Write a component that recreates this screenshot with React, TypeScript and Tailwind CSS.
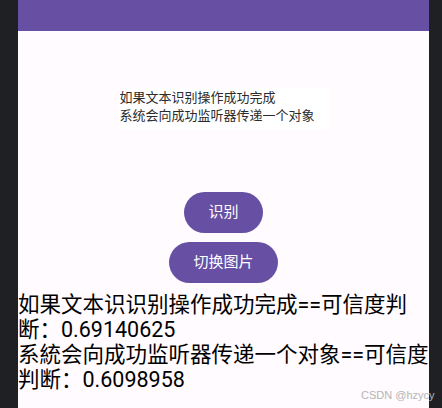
export default function App() {
  const results = [
    '如果文本识识别操作成功完成==可信度判',
    '断：0.69140625',
    '系統会向成功监听器传递一个对象==可信度',
    '判断：0.6098958',
  ];

  return (
    <div className="relative flex h-[408px] w-[442px] overflow-hidden bg-[#1f2024] font-['Roboto','Noto_Sans_CJK_SC',sans-serif]">
      <div className="w-[18px] shrink-0" />

      <div className="flex w-[411px] shrink-0 flex-col bg-[#fffbfe]">
        {/* App bar */}
        <div className="h-[31px] bg-[#6750a4]" />

        {/* Source image */}
        <div className="mt-[57px] h-[42px] w-[210px] self-center bg-white pl-[1px] font-['Noto_Sans_CJK_SC',sans-serif] text-[13px] leading-[18px] text-[#2b2b2b]">
          <div>如果文本识别操作成功完成</div>
          <div>系统会向成功监听器传递一个对象</div>
        </div>

        {/* Buttons */}
        <button className="mt-[62px] flex h-[41px] items-center justify-center self-center rounded-full bg-[#6750a4] px-6 text-[15px] text-white">
          识别
        </button>
        <button className="mt-[9px] flex h-[41px] items-center justify-center self-center rounded-full bg-[#6750a4] px-6 text-[15px] text-white">
          切换图片
        </button>

        {/* Recognition result */}
        <div className="mt-[9px] text-[21.5px] leading-[25px] text-black">
          {results.map((line, idx) => (
            <div key={idx} className="whitespace-nowrap">
              {line}
            </div>
          ))}
        </div>
      </div>

      <div className="w-[13px] shrink-0" />

      <div className="absolute left-[361px] top-[387px] font-['Liberation_Sans',sans-serif] text-[11px] text-[#b4b4b4]">
        CSDN @hzycy
      </div>
    </div>
  );
}
